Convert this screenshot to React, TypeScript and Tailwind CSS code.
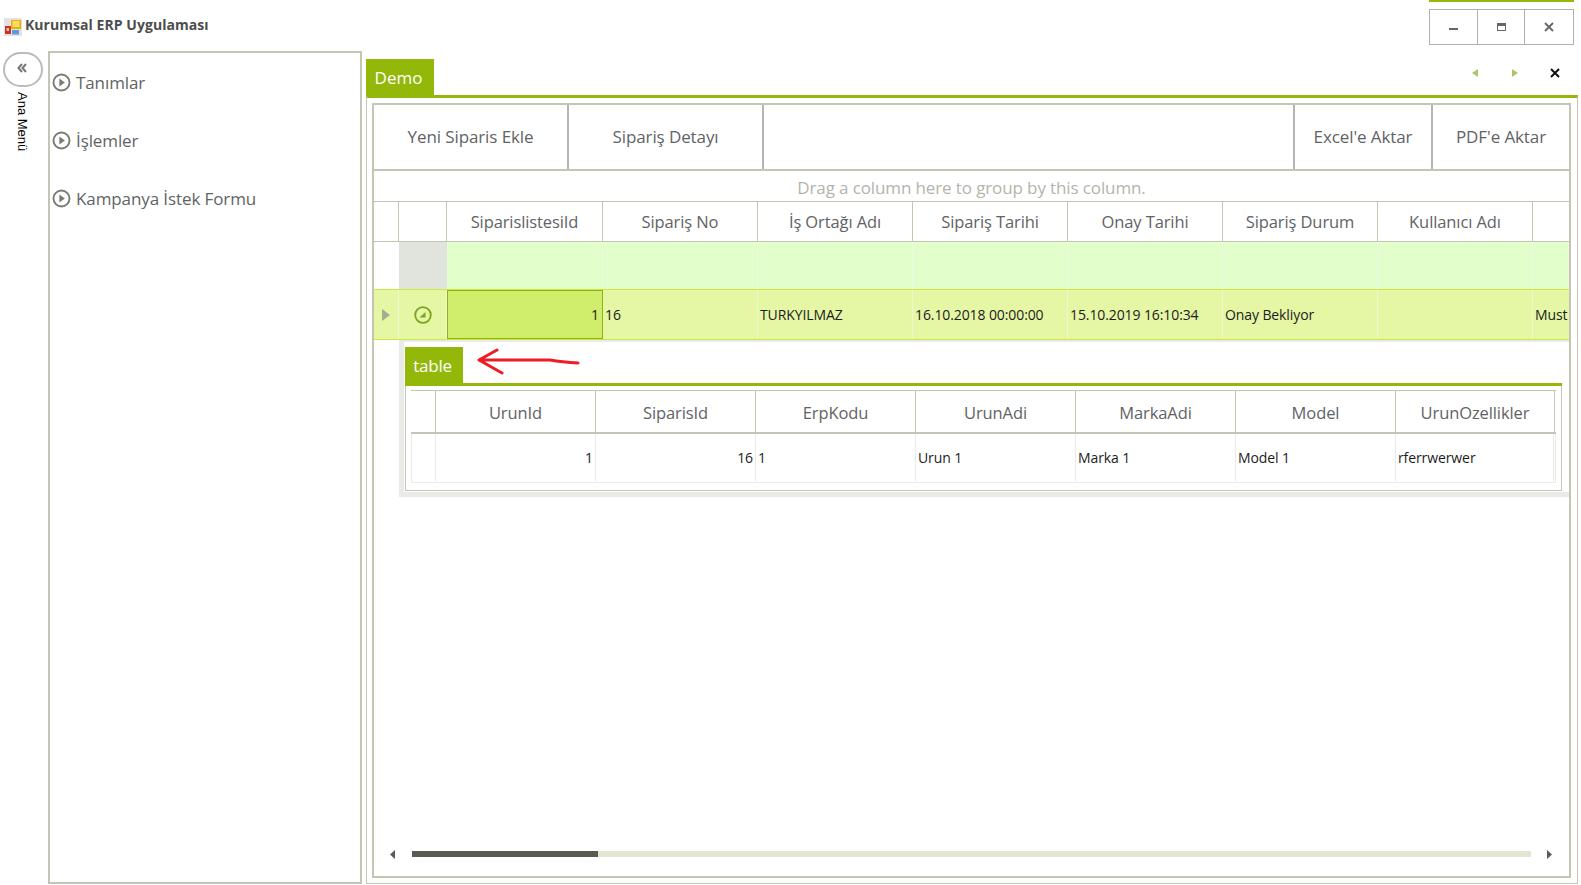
const sans = "font-['Open_Sans','Noto_Sans',sans-serif]";

function CircleArrow({ className = "" }: { className?: string }) {
  return (
    <svg viewBox="0 0 18 18" className={className}>
      <circle cx="9" cy="9" r="7.6" fill="none" stroke="#7a7a72" strokeWidth="1.8" />
      <path d="M7 5.2 L12.2 9 L7 12.8 Z" fill="#7a7a72" />
    </svg>
  );
}

function MenuItem({ label }: { label: string }) {
  return (
    <div className="flex h-[58px] items-center pl-[2px]">
      <CircleArrow className="mr-[5px] h-[19px] w-[19px] shrink-0" />
      <span className="text-[17px] leading-none tracking-[-0.1px] text-[#5f6366]">{label}</span>
    </div>
  );
}

function WinButton({ children, last }: { children: React.ReactNode; last?: boolean }) {
  return (
    <div className={`flex h-full w-[48px] items-center justify-center ${last ? "" : "border-r border-[#b0b0b0]"}`}>
      {children}
    </div>
  );
}

const mainCols = ["SiparislistesiId", "Sipariş No", "İş Ortağı Adı", "Sipariş Tarihi", "Onay Tarihi", "Sipariş Durum", "Kullanıcı Adı"];
const mainVals = ["16", "TURKYILMAZ", "16.10.2018 00:00:00", "15.10.2019 16:10:34", "Onay Bekliyor", ""];
const subCols = ["UrunId", "SiparisId", "ErpKodu", "UrunAdi", "MarkaAdi", "Model", "UrunOzellikler"];
const subVals: { t: string; right?: boolean }[] = [
  { t: "1", right: true },
  { t: "16", right: true },
  { t: "1" },
  { t: "Urun 1" },
  { t: "Marka 1" },
  { t: "Model 1" },
  { t: "rferrwerwer" },
];

function ToolButton({ label, className }: { label: string; className: string }) {
  return (
    <div className={`flex h-full items-center justify-center border-r-2 border-[#b4b4b4] text-[17px] tracking-[-0.1px] text-[#5f6366] ${className}`}>
      {label}
    </div>
  );
}

export default function App() {
  return (
    <div className={`flex h-[885px] w-[1581px] flex-col overflow-hidden bg-white ${sans}`}>
      {/* title bar */}
      <div className="flex h-[51px] shrink-0 items-start">
        <div className="mt-[18px] ml-[4px] flex items-center">
          <svg viewBox="0 0 18 18" className="h-[18px] w-[18px]">
            <rect width="18" height="18" fill="#e2e2e2" />
            <rect x="1" y="8" width="6" height="8" fill="#c8322c" />
            <rect x="2.5" y="10" width="2.5" height="3" fill="#eeb8a8" />
            <rect x="7" y="2" width="10" height="9" fill="#e8ac14" />
            <rect x="8.5" y="3" width="7" height="6" fill="#fbdc5e" />
            <rect x="8" y="12" width="7" height="4.5" fill="#5b9be0" />
          </svg>
          <span className="mt-[-4px] ml-[3px] text-[14px] leading-[14px] font-bold tracking-[0.05px] text-[#4d4d4d]">Kurumsal ERP Uygulaması</span>
        </div>
        <div className="mr-[7px] ml-auto flex w-[145px] flex-col">
          <div className="h-[2px] bg-[#93b80a]" />
          <div className="mt-[7px] flex h-[36px] border border-[#b0b0b0]">
            <WinButton>
              <div className="mt-[4px] h-[2px] w-[9px] bg-[#666]" />
            </WinButton>
            <WinButton>
              <div className="h-[8px] w-[9px] border border-t-[3px] border-[#666]" />
            </WinButton>
            <WinButton last>
              <svg viewBox="0 0 10 10" className="h-[10px] w-[10px]">
                <path d="M1 1 L9 9 M9 1 L1 9" stroke="#666" strokeWidth="1.8" />
              </svg>
            </WinButton>
          </div>
        </div>
      </div>

      <div className="flex min-h-0 flex-1">
        {/* collapse rail */}
        <div className="flex w-[48px] shrink-0 flex-col pl-[3px]">
          <div className="mt-[1px] flex h-[35px] w-[40px] items-center justify-center rounded-[18px] border-2 border-[#bbbbbb] pr-[3px] pb-[4px]">
            <svg viewBox="0 0 10 10" className="h-[10px] w-[10px]">
              <path d="M5 1 L1.5 5 L5 9 M9 1 L5.5 5 L9 9" fill="none" stroke="#777" strokeWidth="2" />
            </svg>
          </div>
          <div className="mt-[5px] ml-[12px] self-start font-['Liberation_Sans',sans-serif] text-[13px] leading-[14px] text-black [writing-mode:vertical-rl]">Ana Menü</div>
        </div>

        {/* menu panel */}
        <div className="mb-[1px] w-[314px] shrink-0 border-2 border-[#c4c6b4]">
          <MenuItem label="Tanımlar" />
          <MenuItem label="İşlemler" />
          <MenuItem label="Kampanya İstek Formu" />
        </div>

        {/* document area */}
        <div className="mr-[3px] ml-[4px] mb-[1px] flex min-w-0 flex-1 flex-col pt-[8px]">
          <div className="flex h-[36px] shrink-0 items-start">
            <div className="flex h-full w-[68px] items-center justify-center bg-[#93b80a] pt-[2px] pr-[3px] text-[17px] text-white">Demo</div>
            <div className="mt-[9px] ml-auto flex items-center">
              <svg viewBox="0 0 6 8" className="h-[8px] w-[6px]"><path d="M6 0 V8 L0 4 Z" fill="#a9c66a" /></svg>
              <svg viewBox="0 0 6 8" className="ml-[34px] h-[8px] w-[6px]"><path d="M0 0 V8 L6 4 Z" fill="#a9c66a" /></svg>
              <svg viewBox="0 0 10 10" className="mr-[18px] ml-[32px] h-[10px] w-[10px]"><path d="M1 1 L9 9 M9 1 L1 9" stroke="#111" strokeWidth="2" /></svg>
            </div>
          </div>
          <div className="flex min-h-0 flex-1 flex-col border-x border-b border-t-[3px] border-x-[#c4c6b4] border-b-[#c4c6b4] border-t-[#93b80a] pt-[5px] pr-[6px] pb-[5px] pl-[5px]">
            <div className="flex min-h-0 flex-1 flex-col border-2 border-[#c4c6b4]">
              {/* toolbar */}
              <div className="flex h-[66px] shrink-0 border-b-2 border-[#c4c6b4]">
                <ToolButton label="Yeni Siparis Ekle" className="w-[195px]" />
                <ToolButton label="Sipariş Detayı" className="w-[195px]" />
                <div className="flex-1 border-r-2 border-[#b4b4b4]" />
                <ToolButton label="Excel'e Aktar" className="w-[138px]" />
                <div className="flex h-full w-[136px] items-center justify-center text-[17px] tracking-[-0.1px] text-[#5f6366]">PDF'e Aktar</div>
              </div>
              {/* group panel */}
              <div className="flex h-[30px] shrink-0 items-center justify-center pt-[3px] text-[17px] tracking-[-0.12px] text-[#b3b5ac]">Drag a column here to group by this column.</div>
              {/* header */}
              <div className="flex h-[41px] shrink-0 overflow-hidden border-y border-[#c4c6b4]">
                <div className="w-[25px] shrink-0 border-r border-[#c4c6b4]" />
                <div className="w-[48px] shrink-0 border-r border-[#c4c6b4]" />
                {mainCols.map((c, i) => (
                  <div key={c} className={`flex shrink-0 items-center justify-center border-r border-[#c4c6b4] pt-[2px] text-[16.5px] tracking-[-0.1px] text-[#5f6366] ${i === 0 ? "w-[156px]" : "w-[155px]"}`}>{c}</div>
                ))}
              </div>
              {/* filter row */}
              <div className="flex h-[47px] shrink-0">
                <div className="w-[25px] shrink-0" />
                <div className="w-[48px] shrink-0 bg-[#e1e3dd]" />
                <div className="flex flex-1">
                  {[0, 1, 2, 3, 4, 5, 6, 7].map((i) => (
                    <div key={i} className={`h-full border-r border-[#eef9e2] bg-[#e2ffcb] ${i === 7 ? "flex-1" : i === 0 ? "w-[156px]" : "w-[155px]"}`} />
                  ))}
                </div>
              </div>
              {/* data row */}
              <div className="flex h-[51px] shrink-0 overflow-hidden border-y border-[#cdea3c] bg-[#e5f6a5] text-[14px] tracking-[-0.1px] text-[#1c1c1c]">
                <div className="flex w-[25px] shrink-0 items-center justify-center border-r border-[#f0f7d0]">
                  <svg viewBox="0 0 8 12" className="h-[12px] w-[8px]"><path d="M0 0 V12 L8 6 Z" fill="#a5ab8f" /></svg>
                </div>
                <div className="flex w-[48px] shrink-0 items-center justify-center border-r border-[#f0f7d0]">
                  <svg viewBox="0 0 18 18" className="h-[18px] w-[18px]">
                    <circle cx="9" cy="9" r="7.8" fill="none" stroke="#7da21c" strokeWidth="1.8" />
                    <path d="M5.5 11.5 L11.5 11.5 L11.5 6 Z" fill="#7da21c" />
                  </svg>
                </div>
                <div className="flex w-[156px] shrink-0 items-center justify-end border border-[#8fb30d] bg-[#d0ed6b] pr-[3px]">1</div>
                {mainVals.map((v, i) => (
                  <div key={i} className="flex w-[155px] shrink-0 items-center border-r border-[#f0f7d0] pl-[2px]">{v}</div>
                ))}
                <div className="flex min-w-0 flex-1 items-center pl-[2px]">Must</div>
              </div>
              {/* detail */}
              <div className="ml-[25px] h-[157px] shrink-0 border-[5px] border-t-[2px] border-r-0 border-[#e9ebe8] bg-white pt-[5px] pr-[7px] pl-[1px]">
                <div className="relative flex h-full flex-col pb-[1px]">
                  <div className="flex h-[39px] shrink-0 border-b-[3px] border-[#93b80a]">
                    <div className="flex h-[39px] w-[58px] items-center justify-center bg-[#93b80a] pr-[3px] pb-[2px] text-[17px] tracking-[-0.2px] text-white">table</div>
                  </div>
                  <svg viewBox="0 0 110 30" className="absolute top-0 left-[67px] h-[30px] w-[110px]">
                    <path d="M25 3 L7 13 L30 26 M7 13 L78 13 Q90 15 106 16" fill="none" stroke="#ee1c25" strokeWidth="3" strokeLinecap="round" strokeLinejoin="round" />
                  </svg>
                  <div className="flex min-h-0 flex-1 flex-col border-x border-b border-[#c4c6b4] px-[5px] pt-[4px] pb-[7px]">
                    <div className="flex h-[44px] shrink-0 border-y border-b-2 border-[#c4c6b4]">
                      <div className="w-[25px] shrink-0 border-r border-[#c4c6b4]" />
                      {subCols.map((c, i) => (
                        <div key={c} className={`flex shrink-0 items-center justify-center border-r border-[#c4c6b4] pt-[3px] text-[16.5px] tracking-[-0.1px] text-[#5f6366] ${i === 6 ? "w-[159px]" : "w-[160px]"}`}>{c}</div>
                      ))}
                    </div>
                    <div className="flex min-h-0 flex-1 border-x border-b border-[#e9ebe8] pb-[1px] text-[14px] tracking-[-0.1px] text-[#1c1c1c]">
                      <div className="w-[24px] shrink-0 border-r border-[#e9ebe8]" />
                      {subVals.map((v, i) => (
                        <div key={i} className={`flex shrink-0 items-center border-r border-[#e9ebe8] px-[2px] ${i === 6 ? "w-[158px]" : "w-[160px]"} ${v.right ? "justify-end" : ""}`}>{v.t}</div>
                      ))}
                    </div>
                  </div>
                </div>
              </div>
              {/* scrollbar */}
              <div className="mt-auto mb-[18px] flex h-[8px] shrink-0 items-center pl-[16px]">
                <svg viewBox="0 0 5 9" className="h-[9px] w-[5px]"><path d="M5 0 V9 L0 4.5 Z" fill="#5a5c54" /></svg>
                <div className="ml-[17px] flex h-[6px] w-[1119px] bg-[#e3e6d2]">
                  <div className="h-full w-[186px] bg-[#5a5c54]" />
                </div>
                <svg viewBox="0 0 5 9" className="ml-[16px] h-[9px] w-[5px]"><path d="M0 0 V9 L5 4.5 Z" fill="#5a5c54" /></svg>
              </div>
            </div>
          </div>
        </div>
      </div>
    </div>
  );
}
